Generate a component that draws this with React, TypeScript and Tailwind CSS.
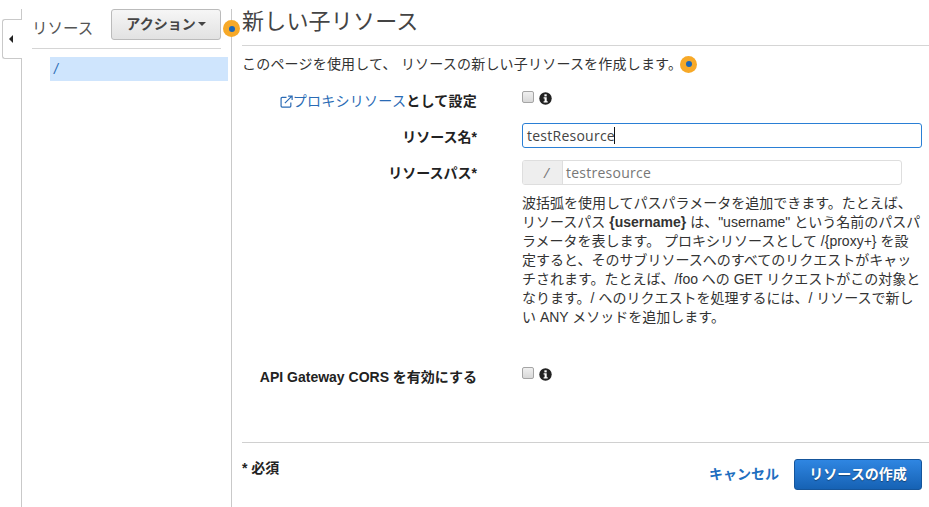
import React from "react";

function Info() {
  return (
    <svg width="13" height="13" viewBox="0 0 13 13" className="shrink-0 mt-[1px]">
      <circle cx="6.5" cy="6.5" r="6.2" fill="#222" />
      <rect x="5.4" y="2.3" width="2.3" height="2.1" fill="#fff" />
      <path d="M4.6 5.2h3.1v4h1v1.3H4.6V9.2h1V6.5h-1z" fill="#fff" />
    </svg>
  );
}

function Beacon() {
  return (
    <span className="flex w-[17px] h-[17px] items-center justify-center rounded-full bg-[#f7a928]">
      <span className="w-[6px] h-[6px] rounded-full bg-[#1a66b8]" />
    </span>
  );
}

function Check() {
  return <span className="block w-[12px] h-[12px] rounded-[2px] border border-[#a5a5a5] bg-gradient-to-b from-[#f0f0f0] to-[#d8d8d8]" />;
}

export default function App() {
  return (
    <div className="flex h-[507px] w-[929px] items-start overflow-hidden bg-white text-[14px] text-[#333] font-['Liberation_Sans','Noto_Sans_CJK_JP',sans-serif]">
      <div className="relative mt-[9px] h-[498px] w-[22px] shrink-0 border-r border-[#c9c9c9]">
        <div className="absolute left-[2px] top-[10px] flex h-[40px] w-[20px] items-center justify-center rounded-l-[3px] border border-r-0 border-[#c9c9c9] bg-white">
          <span className="h-0 w-0 border-y-[4px] border-r-[4px] border-y-transparent border-r-[#222] mr-[3px]" />
        </div>
      </div>

      <div className="relative mt-[9px] h-[498px] w-[210px] shrink-0 border-r border-[#c9c9c9]">
        <div className="ml-[10px] mr-[10px] flex h-[40px] items-start justify-between border-b border-[#d5d5d5]">
          <span className="pt-[9px] text-[15.5px] leading-[22px] text-[#555]">リソース</span>
          <button className="flex h-[31px] w-[110px] items-center justify-center rounded-[3px] border border-[#bbb] bg-gradient-to-b from-[#f6f6f6] to-[#e2e2e2] pb-[1px] text-[14px] font-bold text-[#444]">
            アクション
            <span className="ml-[2px] h-0 w-0 border-x-[4px] border-t-[4px] border-x-transparent border-t-[#444]" />
          </button>
        </div>
        <div className="ml-[28px] mr-[3px] mt-[8px] h-[24px] bg-[#cfe5fd] pl-[4px] text-[14px] leading-[24px] text-[#2a6bb5]">
          <span className="italic">/</span>
        </div>
        <div className="absolute right-[-9px] top-[11px]">
          <Beacon />
        </div>
      </div>

      <div className="flex min-w-0 flex-1 flex-col pl-[10px]">
        <h1 className="h-[46px] border-b border-[#d5d5d5] pt-[7px] text-[22px] leading-[30px] tracking-[0.2px] font-normal text-[#444]">新しい子リソース</h1>
        <div className="mt-[8px] flex h-[20px] items-center text-[14px] leading-[20px] tracking-[0.2px] text-[#333]">
          <span>このページを使用して、 リソースの新しい子リソースを作成します。</span>
          <span className="ml-[-2px]"><Beacon /></span>
        </div>

        <div className="mt-[16px] grid grid-cols-[235px_402px] gap-x-[45px]">
          <div className="h-[30px] pt-[1px] text-right text-[14px] leading-[20px] font-bold text-[#222]">
            <span className="inline-flex items-center justify-end tracking-[0.25px]">
              <svg width="13" height="13" viewBox="0 0 12 12" fill="none" stroke="#2a6bb5" strokeWidth="1.1">
                <path d="M6 2.2H2a1 1 0 0 0-1 1v7a1 1 0 0 0 1 1h7a1 1 0 0 0 1-1V7" />
                <path d="M4.5 7.5 10.5 1.5M7.5 1h3.7v3.7" />
              </svg>
              <a className="font-normal text-[#2a6bb5]">プロキシリソース</a>として設定
            </span>
          </div>
          <div className="flex h-[30px] items-start gap-[5px] pt-[1px]">
            <Check />
            <Info />
          </div>

          <div className="mt-[3px] h-[37px] pt-[4px] text-right text-[14px] leading-[20px] font-bold text-[#222]">リソース名*</div>
          <div className="mt-[3px] h-[37px]">
            <div className="flex h-[25px] w-[400px] items-center rounded-[3px] border border-[#2a7fd5] pl-[4px] font-['Open_Sans',sans-serif] text-[14px] tracking-[0.25px] text-[#444]">
              testResource<span className="ml-[-1px] h-[17px] w-px bg-[#111]" />
            </div>
          </div>

          <div className="h-[25px] pt-[3px] text-right text-[14px] leading-[20px] font-bold text-[#222]">リソースパス*</div>
          <div className="flex h-[25px] w-[380px] overflow-hidden rounded-[3px] border border-[#dedede] font-['Open_Sans',sans-serif] text-[14px]">
            <span className="flex w-[40px] shrink-0 items-center justify-start border-r border-[#dedede] bg-[#eeeeee] pl-[21px] italic text-[#777]">/</span>
            <span className="flex items-center pl-[3px] tracking-[0.25px] text-[#777]">testresource</span>
          </div>

          <div />
          <p className="mt-[9px] w-[400px] text-[14px] leading-[19px] text-[#333]">
            波括弧を使用してパスパラメータを追加できます。たとえば、リソースパス <b>{"{username}"}</b> は、"username" という名前のパスパラメータを表します。 プロキシリソースとして /{"{proxy+}"} を設定すると、そのサブリソースへのすべてのリクエストがキャッチされます。たとえば、/foo への GET リクエストがこの対象となります。/ へのリクエストを処理するには、/ リソースで新しい ANY メソッドを追加します。
          </p>

          <div className="mt-[40px] text-right text-[14px] leading-[20px] font-bold text-[#222]">API Gateway CORS を有効にする</div>
          <div className="mt-[40px] flex items-start gap-[5px]">
            <Check />
            <Info />
          </div>
        </div>

        <div className="mt-[55px] flex border-t border-[#d0d0d0] pt-[16px]">
          <span className="text-[14px] font-bold leading-[18px] text-[#222]">* 必須</span>
          <div className="ml-auto mr-[7px] flex items-center gap-[15px]">
            <a className="text-[14px] font-bold text-[#1f6fc0]">キャンセル</a>
            <button className="h-[31px] w-[128px] rounded-[3px] border border-[#15559b] bg-gradient-to-b from-[#2f86e2] to-[#1662b4] text-[14px] font-bold text-white [text-shadow:0_1px_1px_rgba(0,0,0,0.4)]">リソースの作成</button>
          </div>
        </div>
      </div>
    </div>
  );
}
